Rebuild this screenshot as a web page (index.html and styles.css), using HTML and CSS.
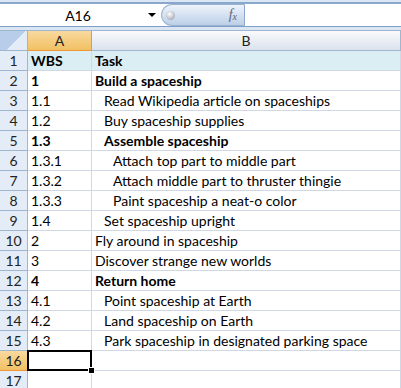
FILE: index.html
```html
<!DOCTYPE html>
<html lang="en">
<head>
  <meta charset="UTF-8" />
  <title>WBS – Spaceship</title>
  <link rel="stylesheet" href="styles.css">
</head>
<body>

  <div class="formula-bar">
    <div class="name-box">
      <span class="name-text">A16</span>
      <span class="name-arrow"></span>
    </div>
    <div class="fx-pill">
      <span class="knob"></span>
      <span class="fx">f<sub>x</sub></span>
    </div>
    <div class="formula-input"></div>
  </div>

  <div class="sheet">
    <div class="corner"></div>
    <div class="col-head active">A</div>
    <div class="col-head">B</div>

    <div class="row-head">1</div>
    <div class="cell title bold">WBS</div>
    <div class="cell title bold">Task</div>

    <div class="row-head">2</div>
    <div class="cell bold">1</div>
    <div class="cell bold">Build a spaceship</div>

    <div class="row-head">3</div>
    <div class="cell">1.1</div>
    <div class="cell lvl1">Read Wikipedia article on spaceships</div>

    <div class="row-head">4</div>
    <div class="cell">1.2</div>
    <div class="cell lvl1">Buy spaceship supplies</div>

    <div class="row-head">5</div>
    <div class="cell bold">1.3</div>
    <div class="cell lvl1 bold">Assemble spaceship</div>

    <div class="row-head">6</div>
    <div class="cell">1.3.1</div>
    <div class="cell lvl2">Attach top part to middle part</div>

    <div class="row-head">7</div>
    <div class="cell">1.3.2</div>
    <div class="cell lvl2">Attach middle part to thruster thingie</div>

    <div class="row-head">8</div>
    <div class="cell">1.3.3</div>
    <div class="cell lvl2">Paint spaceship a neat-o color</div>

    <div class="row-head">9</div>
    <div class="cell">1.4</div>
    <div class="cell lvl1">Set spaceship upright</div>

    <div class="row-head">10</div>
    <div class="cell">2</div>
    <div class="cell">Fly around in spaceship</div>

    <div class="row-head">11</div>
    <div class="cell">3</div>
    <div class="cell">Discover strange new worlds</div>

    <div class="row-head">12</div>
    <div class="cell bold">4</div>
    <div class="cell bold">Return home</div>

    <div class="row-head">13</div>
    <div class="cell">4.1</div>
    <div class="cell lvl1">Point spaceship at Earth</div>

    <div class="row-head">14</div>
    <div class="cell">4.2</div>
    <div class="cell lvl1">Land spaceship on Earth</div>

    <div class="row-head">15</div>
    <div class="cell">4.3</div>
    <div class="cell lvl1">Park spaceship in designated parking space</div>

    <div class="row-head active">16</div>
    <div class="cell selected"><span class="fill-handle"></span></div>
    <div class="cell"></div>

    <div class="row-head">17</div>
    <div class="cell"></div>
    <div class="cell"></div>
  </div>

</body>
</html>
```

FILE: styles.css
```css
body {
  margin: 0;
  font-family: Lato, "Open Sans", sans-serif;
  font-size: 14px;
  color: #000;
  background-color: #dbe6f4;
  overflow: hidden;
}

.formula-bar {
  display: flex;
  height: 22px;
  margin-top: 2px;
  border-top: 2px solid #8aa8cc;
  border-bottom: 1px solid #7f9fc6;
  background-color: #fff;
}

.name-box {
  width: 161px;
  display: flex;
  align-items: center;
  background-color: #fff;
}

.name-text {
  flex: 1;
  text-align: center;
  font-size: 14px;
  padding-left: 8px;
}

.name-arrow {
  width: 0;
  height: 0;
  margin-right: 5px;
  border-left: 4px solid transparent;
  border-right: 4px solid transparent;
  border-top: 4px solid #000;
}

.fx-pill {
  width: 84px;
  display: flex;
  align-items: center;
  justify-content: space-between;
  box-sizing: border-box;
  padding: 0 7px 0 4px;
  border: 1px solid #9bb2d1;
  border-right: 1px solid #8aa8cc;
  border-radius: 11px 0 0 11px;
  background: linear-gradient(to bottom, #eef3fa, #bccfe8);
}

.knob {
  width: 9px;
  height: 9px;
  border-radius: 50%;
  background: radial-gradient(circle at 40% 35%, #fff, #b9bec6 60%, #9aa3af);
}

.fx {
  font-family: "Liberation Serif", serif;
  font-style: italic;
  font-size: 14px;
  color: #5a6677;
}

.fx sub {
  font-size: 10px;
  vertical-align: -1px;
}

.formula-input {
  flex: 1;
  background-color: #fff;
}

.sheet {
  display: grid;
  grid-template-columns: 28px 64px 1fr;
  grid-auto-rows: 20px;
  margin-top: 3px;
  border-top: 1px solid #9eb6ce;
  background-color: #fff;
}

.corner {
  border-right: 1px solid #9eb6ce;
  border-bottom: 1px solid #9eb6ce;
  background: linear-gradient(135deg, #b7cdea 55%, #e4ecf7 56%);
  box-sizing: border-box;
}

.col-head {
  display: flex;
  align-items: center;
  justify-content: center;
  box-sizing: border-box;
  border-right: 1px solid #9eb6ce;
  border-bottom: 1px solid #9eb6ce;
  background: linear-gradient(to bottom, #f9fafc, #dbe2ec);
  font-size: 14px;
  color: #222;
}

.col-head.active {
  border-right-color: #f29536;
  border-bottom-color: #f29536;
  background: linear-gradient(to bottom, #f9d99f, #f1c163);
}

.row-head {
  display: flex;
  align-items: center;
  justify-content: center;
  box-sizing: border-box;
  border-right: 1px solid #9eb6ce;
  border-bottom: 1px solid #9eb6ce;
  background-color: #e4ecf7;
  font-size: 14px;
  color: #222;
}

.row-head.active {
  border-right-color: #f29536;
  border-bottom-color: #f29536;
  background: linear-gradient(to bottom, #f9d99f, #f1c163);
}

.cell {
  box-sizing: border-box;
  border-right: 1px solid #d0d7e5;
  border-bottom: 1px solid #d0d7e5;
  padding: 2px 0 0 3px;
  line-height: 16px;
  white-space: nowrap;
  overflow: visible;
}

.cell.title {
  background-color: #dbeef3;
}

.bold {
  font-weight: bold;
}

.lvl1 {
  padding-left: 12px;
}

.lvl2 {
  padding-left: 21px;
}

.cell.selected {
  position: relative;
  border: 2px solid #000;
  margin: -1px 0 0 -1px;
  width: calc(100% + 1px);
  height: 21px;
}

.fill-handle {
  position: absolute;
  right: -5px;
  bottom: -5px;
  width: 5px;
  height: 5px;
  background-color: #000;
  border: 1px solid #fff;
}
```
